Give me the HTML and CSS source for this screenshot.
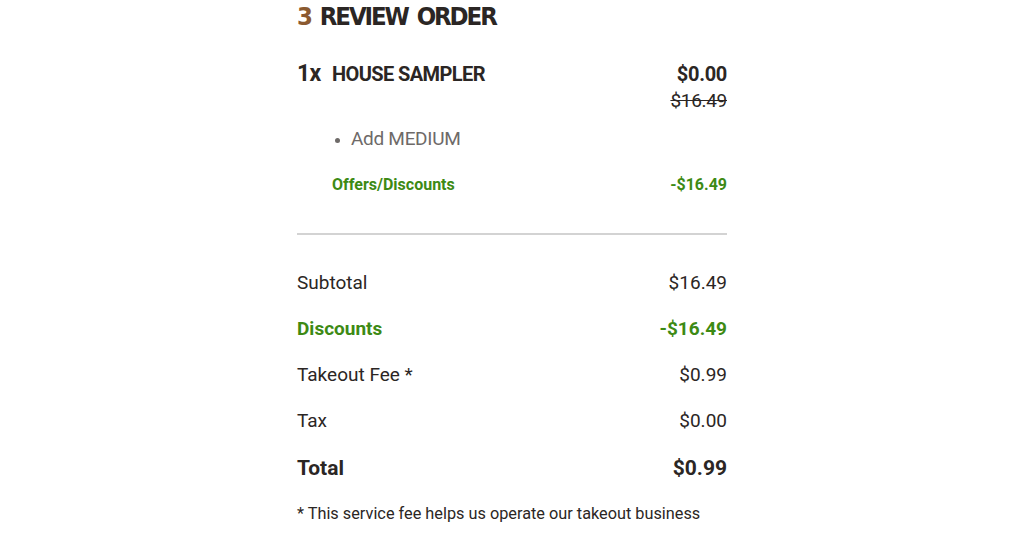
FILE: index.html
```html
<!DOCTYPE html>
<html>
<head>
<meta charset="utf-8">
<link rel="stylesheet" href="styles.css">
</head>
<body>
<main class="review">
  <h2 class="title"><span class="step">3</span> REVIEW ORDER</h2>
  <div class="item">
    <div class="qty">1x</div>
    <div class="item-body">
      <div class="item-head">
        <div class="name">HOUSE SAMPLER</div>
        <div class="prices">
          <div class="price">$0.00</div>
          <div class="old-price">$16.49</div>
        </div>
      </div>
      <ul class="mods">
        <li>Add MEDIUM</li>
      </ul>
      <div class="offers">
        <span>Offers/Discounts</span>
        <span>-$16.49</span>
      </div>
    </div>
  </div>
  <hr class="divider">
  <div class="summary">
    <div class="row"><span>Subtotal</span><span>$16.49</span></div>
    <div class="row green"><span>Discounts</span><span>-$16.49</span></div>
    <div class="row"><span>Takeout Fee *</span><span>$0.99</span></div>
    <div class="row"><span>Tax</span><span>$0.00</span></div>
    <div class="row total"><span>Total</span><span>$0.99</span></div>
  </div>
  <p class="note">* This service fee helps us operate our takeout business</p>
</main>
</body>
</html>
```

FILE: styles.css
```css
html, body {
  margin: 0;
  padding: 0;
  background: #fff;
}
body {
  font-family: Roboto, "Noto Sans", sans-serif;
  color: #2b2624;
}
.review {
  width: 430px;
  margin: 0 auto;
}
.title {
  margin: 0;
  height: 32px;
  line-height: 32px;
  font-family: "DejaVu Sans Condensed", "DejaVu Sans", sans-serif;
  font-weight: bold;
  font-size: 25.5px;
  letter-spacing: -2.1px;
  word-spacing: 3px;
  color: #2b2624;
}
.step {
  color: #8b5a30;
}
.item {
  display: flex;
  margin-top: 28px;
}
.qty {
  width: 35px;
  font-size: 23px;
  font-weight: 700;
  line-height: 28px;
  letter-spacing: -0.8px;
}
.item-body {
  flex: 1;
}
.item-head {
  display: flex;
  justify-content: space-between;
}
.name {
  font-size: 20px;
  font-weight: 700;
  line-height: 28px;
  letter-spacing: -0.6px;
}
.prices {
  text-align: right;
}
.price {
  font-size: 20px;
  font-weight: 700;
  line-height: 28px;
  letter-spacing: -0.3px;
}
.old-price {
  font-size: 19px;
  line-height: 26px;
  letter-spacing: -0.3px;
  text-decoration: line-through;
}
.mods {
  margin: 11px 0 0;
  padding: 0 0 0 19px;
  font-size: 19px;
  line-height: 28px;
  letter-spacing: -0.3px;
  color: #6e6a68;
}
.mods li::marker {
  font-size: 15px;
}
.offers {
  display: flex;
  justify-content: space-between;
  margin-top: 20px;
  font-size: 16px;
  font-weight: 700;
  line-height: 24px;
  color: #3d8a14;
}
.divider {
  margin: 36px 0 0;
  border: 0;
  border-top: 2px solid #d3d3d3;
}
.summary {
  margin-top: 25px;
}
.row {
  display: flex;
  justify-content: space-between;
  height: 46px;
  line-height: 46px;
  font-size: 19px;
}
.row.green {
  color: #3d8a14;
  font-weight: 700;
}
.row.total {
  font-weight: 700;
  font-size: 21px;
  height: 47px;
  line-height: 48px;
}
.note {
  margin: 0;
  font-size: 16.3px;
  line-height: 46px;
}
```
